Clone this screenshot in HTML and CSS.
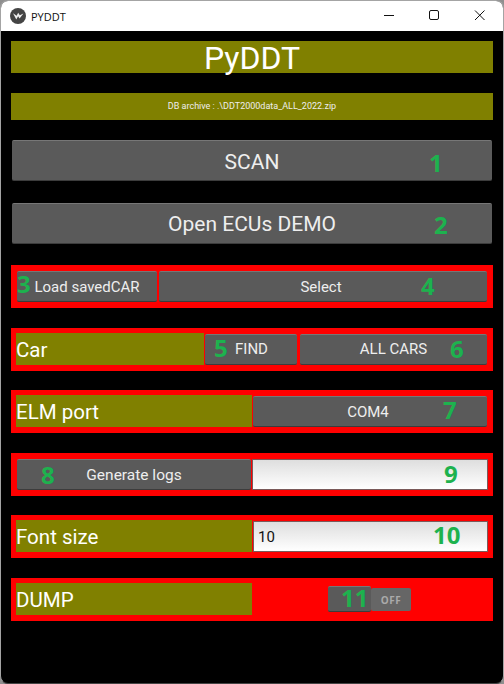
FILE: index.html
```html
<!DOCTYPE html>
<html lang="en">
<head>
<meta charset="UTF-8" />
<meta name="viewport" content="width=device-width, initial-scale=1" />
<title>PYDDT</title>
<link rel="stylesheet" href="styles.css">
</head>
<body>

<div class="window">
  <div class="titlebar">
    <svg class="app-icon" width="16" height="16" viewBox="0 0 16 16">
      <circle cx="8" cy="8" r="8" fill="#444"/>
      <path d="M3 5.2 L6.3 11.6 L8.1 8.2 L9.6 10.4 L13.4 5.4 L9.8 7.2 L8.2 4.8 L6.6 7.8 Z" fill="#eee"/>
    </svg>
    <span class="app-name">PYDDT</span>
    <div class="win-controls">
      <svg width="46" height="30" viewBox="0 0 46 30"><path d="M19 14.5 H29" stroke="#111" fill="none"/></svg>
      <svg width="46" height="30" viewBox="0 0 46 30"><rect x="18.5" y="9.5" width="9" height="9" rx="1.5" stroke="#111" fill="none"/></svg>
      <svg width="46" height="30" viewBox="0 0 46 30"><path d="M18 9.5 L27.5 19 M27.5 9.5 L18 19" stroke="#111" fill="none"/></svg>
    </div>
  </div>

  <div class="content">
    <div class="heading">PyDDT</div>
    <div class="db-info">DB archive : .\DDT2000data_ALL_2022.zip</div>

    <button class="btn btn-big btn-scan">SCAN<span class="mark mark-1">1</span></button>
    <button class="btn btn-big">Open ECUs DEMO<span class="mark mark-2">2</span></button>

    <div class="rows">
      <div class="row">
        <button class="btn btn-load">Load savedCAR<span class="mark mark-3">3</span></button>
        <button class="btn btn-fill btn-select">Select<span class="mark mark-4">4</span></button>
      </div>

      <div class="row">
        <div class="label label-car">Car</div>
        <button class="btn btn-find">FIND<span class="mark mark-5">5</span></button>
        <button class="btn btn-fill btn-allcars">ALL CARS<span class="mark mark-6">6</span></button>
      </div>

      <div class="row">
        <div class="label">ELM port</div>
        <button class="btn btn-fill btn-com">COM4<span class="mark mark-7">7</span></button>
      </div>

      <div class="row">
        <button class="btn btn-logs">Generate logs<span class="mark mark-8">8</span></button>
        <div class="field"><span class="mark mark-9">9</span></div>
      </div>

      <div class="row">
        <div class="label">Font size</div>
        <div class="field">10<span class="mark mark-10">10</span></div>
      </div>

      <div class="row">
        <div class="label">DUMP</div>
        <div class="switch-wrap">
          <div class="switch">
            <div class="switch-knob"><span class="mark mark-11">11</span></div>
            <div class="switch-off">OFF</div>
          </div>
        </div>
      </div>
    </div>
  </div>
</div>

</body>
</html>
```

FILE: styles.css
```css
html, body {
  margin: 0;
  height: 100%;
}

body {
  background: #8f8f8f;
  font-family: Roboto, sans-serif;
  overflow: hidden;
}

.window {
  height: 684px;
  box-sizing: border-box;
  border: 1px solid #a4a4a4;
  border-bottom-color: #444;
  border-radius: 8px;
  overflow: hidden;
  background: #000;
}

.titlebar {
  height: 30px;
  background: #fff;
  display: flex;
  align-items: center;
  padding-left: 9px;
}

.app-icon {
  margin-right: 5px;
}

.app-name {
  font-family: "Open Sans", sans-serif;
  font-size: 11px;
  color: #111;
}

.win-controls {
  margin-left: auto;
  display: flex;
}

.content {
  padding: 10px 10px 0;
  display: flex;
  flex-direction: column;
}

.heading {
  height: 32px;
  line-height: 34px;
  background: #808000;
  color: #fff;
  font-size: 32px;
  text-align: center;
}

.db-info {
  height: 27px;
  line-height: 27px;
  margin-top: 20px;
  background: #808000;
  color: #eee;
  font-size: 9px;
  text-align: center;
}

.btn {
  position: relative;
  display: block;
  margin: 0;
  padding: 0;
  box-sizing: border-box;
  background: #5a5a5a;
  border: none;
  border-top: 1px solid #777;
  border-bottom: 1px solid #3c3c3c;
  border-radius: 2px;
  color: #eee;
  font-family: Roboto, sans-serif;
  font-size: 15px;
}

.btn-big {
  width: 480px;
  height: 41px;
  margin: 20px 0 0 1px;
  padding-top: 1px;
  font-size: 21px;
}

.btn-big + .btn-big {
  margin-top: 22px;
}

.btn-scan {
  padding-top: 3px;
}

.rows {
  margin-top: 21px;
  display: flex;
  flex-direction: column;
  gap: 19.6px;
}

.row {
  height: 43px;
  box-sizing: border-box;
  padding: 5px;
  background: #f00;
  display: flex;
  gap: 2px;
}

.row > .btn {
  height: 31px;
  margin-top: 1px;
}

.label {
  width: 236px;
  height: 32px;
  line-height: 35px;
  flex-shrink: 0;
  background: #808000;
  color: #fff;
  font-size: 20.5px;
}

.label-car {
  width: 188px;
}

.label + .btn {
  margin-left: -1px;
}

.btn-load {
  width: 140px;
  margin-left: 1px;
}

.btn-select {
  padding-right: 4px;
}

.btn-find {
  width: 92px;
  padding-left: 1px;
}

.btn-allcars {
  margin-left: 1px;
}

.btn-com {
  padding-right: 4px;
}

.btn-logs {
  width: 234px;
  margin-left: 1px;
  padding-top: 1px;
  font-size: 15.5px;
}

.btn-fill {
  flex: 1;
  margin-right: 1px;
}

.field {
  position: relative;
  flex: 1;
  height: 31px;
  margin: 1px 0 0 -1px;
  box-sizing: border-box;
  border: 1px solid #7a5a5a;
  background: linear-gradient(#dedede, #fff);
  color: #111;
  font-size: 15px;
  line-height: 31px;
  padding-left: 4px;
}

.switch-wrap {
  flex: 1;
  display: flex;
  align-items: center;
  padding-left: 74px;
}

.switch {
  display: flex;
  align-items: center;
}

.switch-knob {
  position: relative;
  width: 43px;
  height: 26px;
  box-sizing: border-box;
  background: #5a5a5a;
  border-top: 1px solid #777;
  border-bottom: 1px solid #3c3c3c;
  border-radius: 2px;
}

.switch-off {
  width: 40px;
  height: 23px;
  line-height: 24px;
  background: #666;
  border-radius: 2px;
  color: #aaa;
  font-family: "Open Sans", sans-serif;
  font-size: 10px;
  font-weight: 700;
  letter-spacing: 0.6px;
  text-align: center;
}

/* green numbers painted over the screenshot */
.mark {
  position: absolute;
  color: #1db24e;
  font-family: "Open Sans", sans-serif;
  font-size: 24px;
  font-weight: 700;
  line-height: 24px;
}

.mark-1 { left: 417px; top: 10px; }
.mark-2 { left: 422px; top: 9px; }
.mark-3 { left: 0; top: 0; }
.mark-4 { left: 262px; top: 2px; }
.mark-5 { left: 9px; top: 1px; }
.mark-6 { left: 150px; top: 2px; }
.mark-7 { left: 190px; top: 1px; }
.mark-8 { left: 24px; top: 3px; }
.mark-9 { left: 191px; top: 2px; }
.mark-10 { left: 179px; top: 1px; }
.mark-11 { left: 13px; top: -1px; }
```
